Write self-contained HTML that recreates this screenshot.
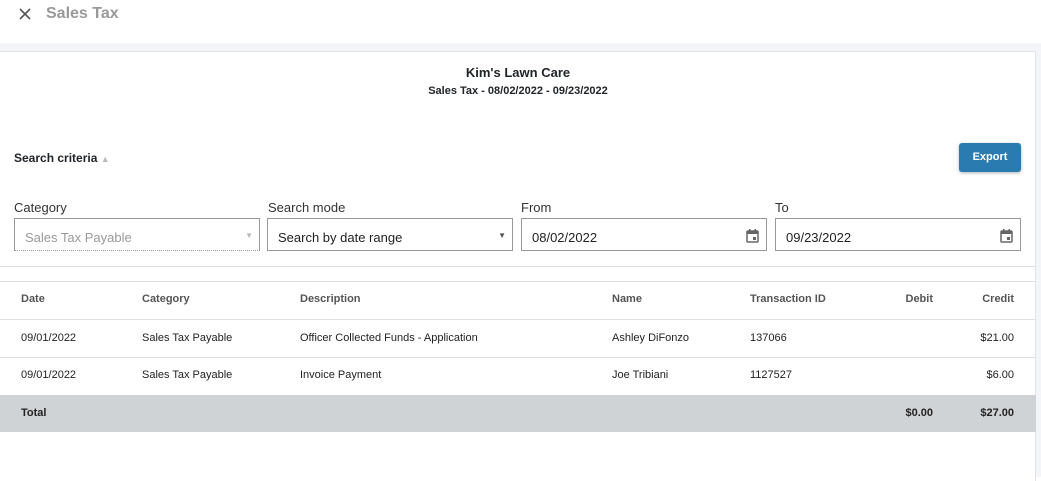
<!DOCTYPE html>
<html><head><style>
*{box-sizing:border-box;margin:0;padding:0}
body{width:1041px;height:477px;overflow:hidden;background:#fff;font-family:"Liberation Sans",Arial,sans-serif;color:#212529;position:relative}
.abs{position:absolute}
.band{left:0;top:43px;width:1041px;height:434px;background:#f4f5f9}
.card{left:0;top:51px;width:1036px;height:430px;background:#fff;border-right:1px solid #e2e3e6;border-top:1px solid #e2e3e6}
.lbl{font-size:13px;color:#333;top:200px}
.inp{top:218px;height:33px;border:1px solid #999;font-size:13px;padding:11px 0 0 10px;color:#222}
.hd{font-size:11px;font-weight:bold;color:#555;top:293px}
.c{font-size:11px;color:#222}
.line{left:0;width:1036px;height:1px;background:#e0e0e0}
</style></head><body>
<svg class="abs" style="left:19px;top:8px" width="12" height="12" viewBox="0 0 12 12"><path d="M1 1L11 11M11 1L1 11" stroke="#555" stroke-width="1.6"/></svg>
<div class="abs" style="left:46px;top:5px;font-size:16px;font-weight:bold;color:#999">Sales Tax</div>
<div class="abs band"></div>
<div class="abs card"></div>
<div class="abs" style="left:0;width:1036px;top:65px;text-align:center;font-size:13px;font-weight:bold">Kim's Lawn Care</div>
<div class="abs" style="left:0;width:1036px;top:85px;text-align:center;font-size:11px;font-weight:bold">Sales Tax - 08/02/2022 - 09/23/2022</div>
<div class="abs" style="left:14px;top:151px;font-size:12px;font-weight:bold">Search criteria <span style="color:#bbb;font-size:9px">▲</span></div>
<div class="abs" style="left:959px;top:143px;width:62px;height:29px;background:#2a7bb0;border-radius:3px;color:#fff;font-size:11px;font-weight:bold;text-align:center;line-height:28px;box-shadow:0 1px 3px rgba(0,0,0,.3)">Export</div>
<div class="abs lbl" style="left:14px">Category</div>
<div class="abs lbl" style="left:268px">Search mode</div>
<div class="abs lbl" style="left:521px">From</div>
<div class="abs lbl" style="left:775px">To</div>
<div class="abs inp" style="left:14px;width:246px;color:#999;border-bottom:1px dotted #999">Sales Tax Payable<span style="position:absolute;right:6px;top:12px;font-size:8px;color:#bbb">▼</span></div>
<div class="abs inp" style="left:267px;width:246px">Search by date range<span style="position:absolute;right:6px;top:12px;font-size:8px;color:#555">▼</span></div>
<div class="abs inp" style="left:521px;width:246px">08/02/2022<svg style="position:absolute;right:7px;top:10px" width="13" height="14" viewBox="0 0 13 14"><rect x="1" y="2" width="11" height="11" rx="1" fill="none" stroke="#666" stroke-width="1.5"/><rect x="1" y="2" width="11" height="3" fill="#666"/><rect x="3" y="0" width="1.5" height="3" fill="#666"/><rect x="8.5" y="0" width="1.5" height="3" fill="#666"/><rect x="7" y="8" width="3" height="3" fill="#666"/></svg></div>
<div class="abs inp" style="left:775px;width:246px">09/23/2022<svg style="position:absolute;right:7px;top:10px" width="13" height="14" viewBox="0 0 13 14"><rect x="1" y="2" width="11" height="11" rx="1" fill="none" stroke="#666" stroke-width="1.5"/><rect x="1" y="2" width="11" height="3" fill="#666"/><rect x="3" y="0" width="1.5" height="3" fill="#666"/><rect x="8.5" y="0" width="1.5" height="3" fill="#666"/><rect x="7" y="8" width="3" height="3" fill="#666"/></svg></div>
<div class="abs line" style="top:266px"></div>
<div class="abs line" style="top:281px"></div>
<div class="abs hd" style="left:21px">Date</div>
<div class="abs hd" style="left:142px">Category</div>
<div class="abs hd" style="left:300px">Description</div>
<div class="abs hd" style="left:612px">Name</div>
<div class="abs hd" style="left:750px">Transaction ID</div>
<div class="abs hd" style="left:880px;width:53px;text-align:right">Debit</div>
<div class="abs hd" style="left:950px;width:64px;text-align:right">Credit</div>
<div class="abs line" style="top:319px"></div>
<div class="abs c" style="top:332px;left:21px">09/01/2022</div>
<div class="abs c" style="top:332px;left:142px">Sales Tax Payable</div>
<div class="abs c" style="top:332px;left:300px">Officer Collected Funds - Application</div>
<div class="abs c" style="top:332px;left:612px">Ashley DiFonzo</div>
<div class="abs c" style="top:332px;left:750px">137066</div>
<div class="abs c" style="top:332px;left:950px;width:64px;text-align:right">$21.00</div>
<div class="abs line" style="top:357px"></div>
<div class="abs c" style="top:369px;left:21px">09/01/2022</div>
<div class="abs c" style="top:369px;left:142px">Sales Tax Payable</div>
<div class="abs c" style="top:369px;left:300px">Invoice Payment</div>
<div class="abs c" style="top:369px;left:612px">Joe Tribiani</div>
<div class="abs c" style="top:369px;left:750px">1127527</div>
<div class="abs c" style="top:369px;left:950px;width:64px;text-align:right">$6.00</div>
<div class="abs" style="left:0;top:395px;width:1036px;height:37px;background:#d0d3d6"></div>
<div class="abs c" style="top:407px;left:21px;font-weight:bold">Total</div>
<div class="abs c" style="top:407px;left:880px;width:53px;text-align:right;font-weight:bold">$0.00</div>
<div class="abs c" style="top:407px;left:950px;width:64px;text-align:right;font-weight:bold">$27.00</div>
</body></html>
